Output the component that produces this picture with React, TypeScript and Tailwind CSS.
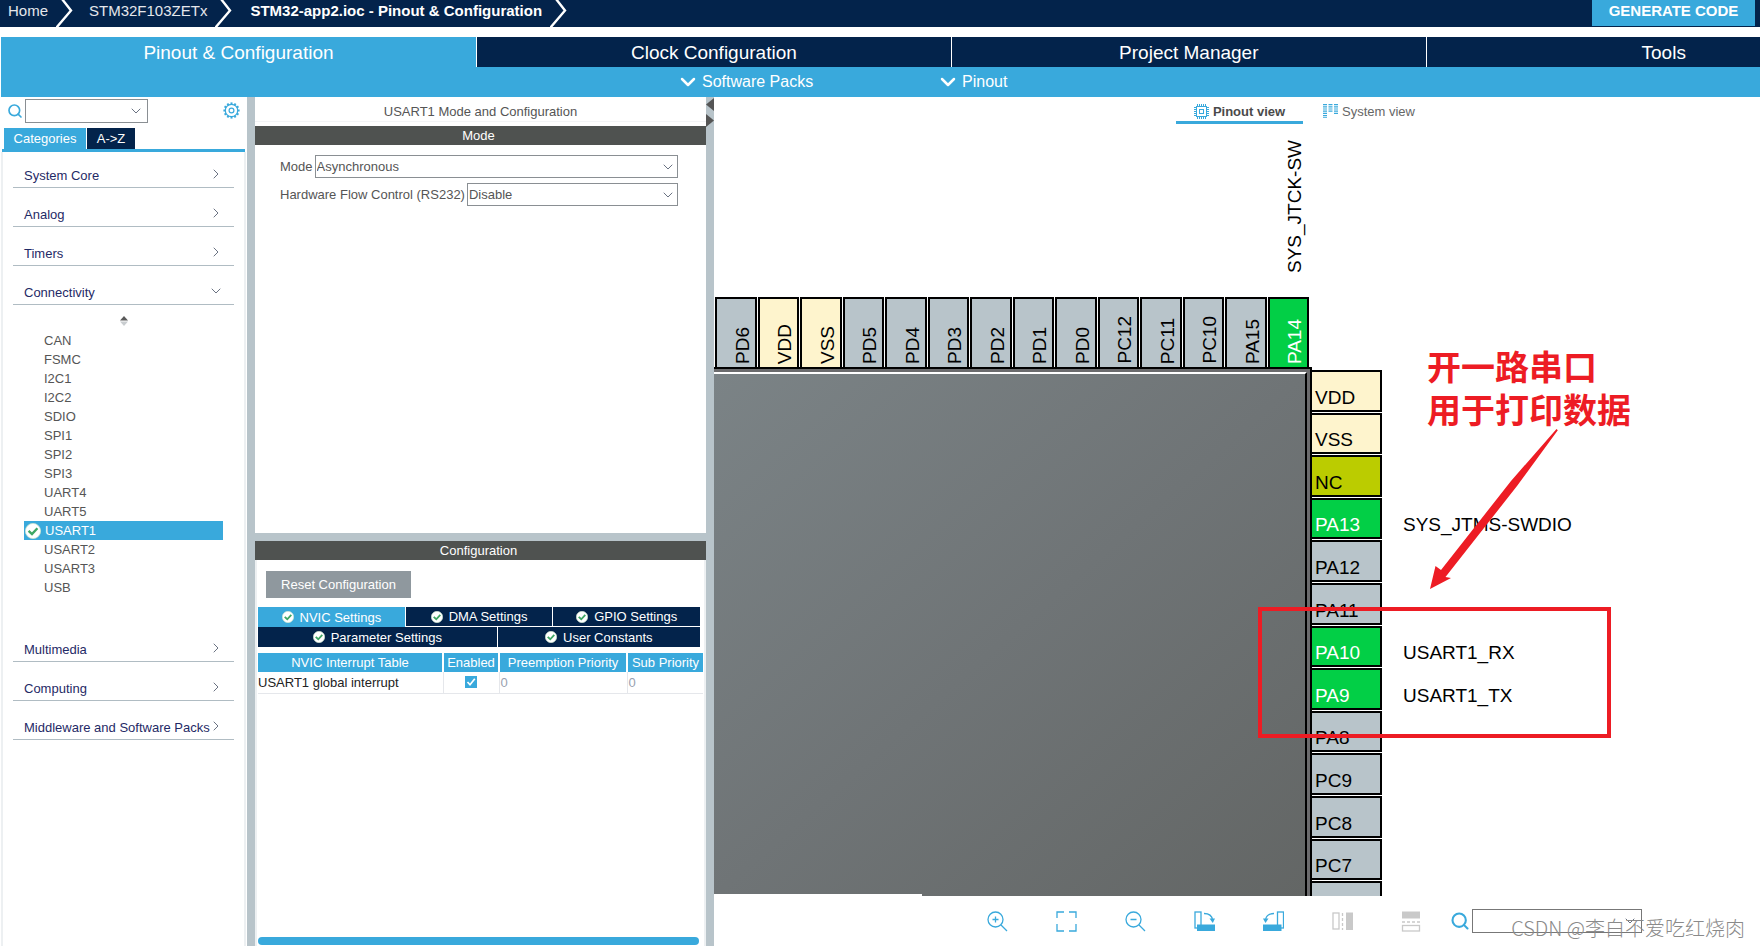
import { ReactNode } from 'react';
import { ChevronDown, ChevronRight, Search } from 'lucide-react';

const categoriesTop = ['System Core', 'Analog', 'Timers'];
const categoriesBottom = ['Multimedia', 'Computing', 'Middleware and Software Packs'];

const connectivity = [
  'CAN', 'FSMC', 'I2C1', 'I2C2', 'SDIO', 'SPI1', 'SPI2', 'SPI3',
  'UART4', 'UART5', 'USART1', 'USART2', 'USART3', 'USB',
];

type Pin = { name: string; kind?: 'power' | 'nc' | 'used'; signal?: string };

const topPins: Pin[] = [
  { name: 'PD6' },
  { name: 'VDD', kind: 'power' },
  { name: 'VSS', kind: 'power' },
  { name: 'PD5' },
  { name: 'PD4' },
  { name: 'PD3' },
  { name: 'PD2' },
  { name: 'PD1' },
  { name: 'PD0' },
  { name: 'PC12' },
  { name: 'PC11' },
  { name: 'PC10' },
  { name: 'PA15' },
  { name: 'PA14', kind: 'used', signal: 'SYS_JTCK-SW' },
];

const rightPins: Pin[] = [
  { name: 'VDD', kind: 'power' },
  { name: 'VSS', kind: 'power' },
  { name: 'NC', kind: 'nc' },
  { name: 'PA13', kind: 'used', signal: 'SYS_JTMS-SWDIO' },
  { name: 'PA12' },
  { name: 'PA11' },
  { name: 'PA10', kind: 'used', signal: 'USART1_RX' },
  { name: 'PA9', kind: 'used', signal: 'USART1_TX' },
  { name: 'PA8' },
  { name: 'PC9' },
  { name: 'PC8' },
  { name: 'PC7' },
  { name: '' },
];

function pinColor(kind?: Pin['kind']) {
  if (kind === 'power') return 'bg-[#fef4cd] text-black';
  if (kind === 'nc') return 'bg-[#bbcc00] text-black';
  if (kind === 'used') return 'bg-[#02cf46] text-white';
  return 'bg-[#b8c4ca] text-black';
}

function CrumbArrow() {
  return (
    <svg width="17" height="27" viewBox="0 0 17 27" fill="none" className="mx-2 shrink-0">
      <path d="M6 -1L15 10.5L0.5 27.5" stroke="white" strokeWidth="2.4" />
    </svg>
  );
}

function CheckBadge({ size }: { size: number }) {
  return (
    <svg width={size} height={size} viewBox="0 0 16 16" className="shrink-0">
      <circle cx="8" cy="8" r="7.6" fill="#fff" stroke="#cfe6cf" strokeWidth="0.8" />
      <path d="M3.6 7.8L7 11L12.4 5.2" fill="none" stroke="#3fa764" strokeWidth="2.4" />
    </svg>
  );
}

function GearIcon() {
  const teeth = [0, 30, 60, 90, 120, 150, 180, 210, 240, 270, 300, 330];
  return (
    <svg width="17" height="17" viewBox="0 0 17 17" fill="none" stroke="#39a9dc">
      <circle cx="8.5" cy="8.5" r="6.2" strokeWidth="1.2" />
      <circle cx="8.5" cy="8.5" r="2.4" strokeWidth="1.2" />
      {teeth.map((a) => (
        <path key={a} d="M8.5 0.4V2.4" strokeWidth="2" transform={`rotate(${a} 8.5 8.5)`} />
      ))}
    </svg>
  );
}

function ChipIcon() {
  const legs = [3.5, 5.5, 7.5, 9.5, 11.5];
  return (
    <svg width="15" height="15" viewBox="0 0 15 15" fill="none" stroke="#39a9dc">
      <rect x="2.5" y="2.5" width="10" height="10" />
      <rect x="5.5" y="5.5" width="4" height="4" />
      {legs.map((p) => (
        <path key={p} d={`M${p} 0V2M${p} 13V15M0 ${p}H2M13 ${p}H15`} />
      ))}
    </svg>
  );
}

function SystemIcon() {
  return (
    <svg width="15" height="14" viewBox="0 0 15 14" fill="none" stroke="#39a9dc" strokeWidth="4">
      <path d="M2 0V14" strokeDasharray="1.2 1" />
      <path d="M7.5 0V8" strokeDasharray="1.2 1" />
      <path d="M13 0V10" strokeDasharray="1.2 1" />
    </svg>
  );
}

function ToolIcon({ label, children }: { label: string; children: ReactNode }) {
  return (
    <button aria-label={label} className="w-[21px] shrink-0">
      <svg width="21" height="21" viewBox="0 0 21 21" fill="none" stroke="#39a9dc" strokeWidth="1.3">
        {children}
      </svg>
    </button>
  );
}

function Category({ label, open }: { label: string; open?: boolean }) {
  const Icon = open ? ChevronDown : ChevronRight;
  return (
    <button className="flex h-9 w-full items-center justify-between border-b border-[#b0bcc3] pt-3 pr-2.5 pl-[11px] text-left whitespace-nowrap text-[#1f2a66]">
      <span>{label}</span>
      <Icon className="-mt-1 -ml-2 h-4 w-4 shrink-0 text-gray-500" strokeWidth={1.5} />
    </button>
  );
}

function SelectRow({ id, label, value }: { id: string; label: string; value: string }) {
  return (
    <div className="flex items-center gap-0.5">
      <label htmlFor={id} className="shrink-0">{label}</label>
      <div className="relative flex-1">
        <select id={id} className="block h-[23px] w-full appearance-none border border-[#8a8f93] bg-white pl-px">
          <option>{value}</option>
        </select>
        <ChevronDown className="pointer-events-none absolute top-1 right-0.5 h-4 w-4 text-gray-500" strokeWidth={1.5} />
      </div>
    </div>
  );
}

function Header() {
  return (
    <header className="shrink-0">
      <div className="flex h-[27px] items-start justify-between bg-[#03234b] pr-[5px] text-[15px] leading-[22px] text-white">
        <nav className="flex pl-2 whitespace-nowrap">
          <a href="#home" className="text-gray-200">Home</a>
          <CrumbArrow />
          <a href="#mcu" className="ml-2 text-gray-200">STM32F103ZETx</a>
          <CrumbArrow />
          <a href="#ioc" className="ml-2.5 font-bold">STM32-app2.ioc - Pinout &amp; Configuration</a>
          <CrumbArrow />
        </nav>
        <button className="h-[26px] w-[163px] bg-[#39a9dc] pb-1 font-bold">GENERATE CODE</button>
      </div>

      <div className="mt-2.5 ml-px flex h-[30px] overflow-hidden text-[19px] text-white">
        <button className="w-[27%] shrink-0 bg-[#39a9dc]">Pinout &amp; Configuration</button>
        <button className="w-[27%] shrink-0 border-l border-white bg-[#03234b]">Clock Configuration</button>
        <button className="w-[27%] shrink-0 border-l border-white bg-[#03234b]">Project Manager</button>
        <button className="w-[27%] shrink-0 border-l border-white bg-[#03234b]">Tools</button>
      </div>
      <div className="ml-px flex h-[30px] items-center justify-center bg-[#39a9dc] text-base text-white">
        <button className="flex w-[260px] items-center gap-0.5">
          <ChevronDown className="h-6 w-6" strokeWidth={2.5} />
          Software Packs
        </button>
        <button className="flex w-[149px] items-center gap-0.5">
          <ChevronDown className="h-6 w-6" strokeWidth={2.5} />
          Pinout
        </button>
      </div>
    </header>
  );
}

function Sidebar() {
  return (
    <aside className="flex w-[247px] shrink-0 flex-col">
      <div className="flex h-[31px] shrink-0 items-start pt-0.5 pr-[7px] pl-[7px]">
        <Search className="mt-1 h-4 w-4 text-[#39a9dc]" strokeWidth={2.5} />
        <div className="relative ml-0.5">
          <input aria-label="Search peripherals" className="block h-6 w-[123px] border border-[#8a8f93] pr-5" />
          <ChevronDown className="pointer-events-none absolute top-1 right-1 h-4 w-4 text-gray-500" strokeWidth={1.5} />
        </div>
        <button aria-label="Settings" className="mt-[3px] ml-auto">
          <GearIcon />
        </button>
      </div>
      <div className="mr-0.5 ml-0.5 flex shrink-0 gap-px border-b-[3px] border-[#39a9dc] pl-0.5 text-white">
        <button className="h-[21px] w-[82px] bg-[#39a9dc]">Categories</button>
        <button className="h-[21px] w-12 bg-[#03234b]">A-&gt;Z</button>
      </div>

      <div className="mr-px ml-px flex-1 border-r-2 border-l-2 border-[#edf0f2] px-2.5">
        <div className="flex flex-col gap-[3px]">
          {categoriesTop.map((c) => (
            <Category key={c} label={c} />
          ))}
          <Category label="Connectivity" open />
          <div className="pb-[26px]">
            <svg width="10" height="10" viewBox="0 0 8 10" className="mx-auto mt-2 mb-[5px]">
              <path d="M4 0L8 4.4H0Z" fill="#5a5a5a" />
              <path d="M4 10L0 5.6H8Z" fill="#c9cdd0" />
            </svg>
            <ul className="px-[11px] text-[#555]">
              {connectivity.map((name) => (
                <li key={name}>
                  {name === 'USART1' ? (
                    <button className="flex h-[19px] w-full items-center gap-1 bg-[#39a9dc] pl-px text-white">
                      <CheckBadge size={16} />
                      {name}
                    </button>
                  ) : (
                    <button className="block h-[19px] w-full pl-5 text-left">{name}</button>
                  )}
                </li>
              ))}
            </ul>
          </div>
          {categoriesBottom.map((c) => (
            <Category key={c} label={c} />
          ))}
        </div>
      </div>
    </aside>
  );
}

function ConfigTab({ label, className }: { label: string; className: string }) {
  return (
    <button className={`flex h-5 items-center justify-center gap-1.5 ${className}`}>
      <CheckBadge size={12} />
      {label}
    </button>
  );
}

function ModePanel() {
  return (
    <section className="flex w-[467px] shrink-0 flex-col border-r-8 border-l-8 border-[#b8c4ca] text-[#555]">
      <div className="flex h-[444px] shrink-0 flex-col border-b-8 border-[#b8c4ca]">
        <h1 className="mb-1 h-[25px] border-b border-gray-100 pt-[5px] text-center">USART1 Mode and Configuration</h1>
        <h2 className="h-[19px] bg-[#4f5250] pr-1 text-center text-white">Mode</h2>
        <div className="flex flex-col gap-[5px] pt-2.5 pr-7 pl-[25px]">
          <SelectRow id="mode" label="Mode" value="Asynchronous" />
          <SelectRow id="flow" label="Hardware Flow Control (RS232)" value="Disable" />
        </div>
      </div>

      <h2 className="h-[19px] shrink-0 bg-[#4f5250] pr-1 text-center text-white">Configuration</h2>
      <div className="flex min-h-0 flex-1 flex-col border-r-2 border-l-2 border-[#edf0f2] px-px">
        <button className="mt-[11px] ml-2 h-[27px] w-[145px] shrink-0 bg-[#8f989e] text-white">Reset Configuration</button>
        <div className="mt-[9px] mr-[3px] flex gap-px text-white">
          <ConfigTab label="NVIC Settings" className="flex-1 bg-[#39a9dc]" />
          <ConfigTab label="DMA Settings" className="flex-1 border-b border-white bg-[#03234b]" />
          <ConfigTab label="GPIO Settings" className="flex-1 border-b border-white bg-[#03234b]" />
        </div>
        <div className="mr-[3px] flex gap-px text-white">
          <ConfigTab label="Parameter Settings" className="w-[54%] bg-[#03234b]" />
          <ConfigTab label="User Constants" className="flex-1 bg-[#03234b]" />
        </div>
        <table className="mt-1.5 w-full table-fixed border-collapse">
          <thead>
            <tr className="h-[19px] bg-[#39a9dc] whitespace-nowrap text-white">
              <th className="border-r-2 border-white font-normal">NVIC Interrupt Table</th>
              <th className="w-14 border-r-2 border-white font-normal">Enabled</th>
              <th className="w-32 border-r-2 border-white font-normal">Preemption Priority</th>
              <th className="w-[76px] font-normal">Sub Priority</th>
            </tr>
          </thead>
          <tbody>
            <tr className="h-[21px] border-b border-gray-200">
              <td className="border-r border-gray-200 text-[#222]">USART1 global interrupt</td>
              <td className="border-r border-gray-200">
                <span className="relative mx-auto block h-3 w-3">
                  <input type="checkbox" defaultChecked aria-label="USART1 global interrupt enabled" className="block h-3 w-3 appearance-none bg-[#39a9dc]" />
                  <svg viewBox="0 0 12 12" className="pointer-events-none absolute inset-0">
                    <path d="M2.5 6L5 8.8L9.8 2.8" fill="none" stroke="white" strokeWidth="1.7" />
                  </svg>
                </span>
              </td>
              <td className="border-r border-gray-200 pl-px text-gray-400">0</td>
              <td className="pl-px text-gray-400">0</td>
            </tr>
          </tbody>
        </table>
        <div className="mt-auto mr-1 mb-px h-2 shrink-0 rounded-full bg-[#39a9dc]" />
      </div>
    </section>
  );
}

function ChipView() {
  return (
    <div className="relative flex min-h-0 flex-1 flex-col overflow-hidden text-[19px] leading-6">
      <div className="flex h-[227px] w-[595px] shrink-0 items-end gap-px pl-px">
        {topPins.map((pin) => (
          <div key={pin.name} className="flex flex-1 flex-col items-end">
            {pin.signal && (
              <span className="mr-0.5 mb-6 rotate-180 whitespace-nowrap text-black [writing-mode:vertical-rl]">{pin.signal}</span>
            )}
            <div className={`flex h-[70px] w-full items-end justify-end border-2 border-b-0 border-black pb-[3px] ${pinColor(pin.kind)}`}>
              <span className="rotate-180 [writing-mode:vertical-rl]">{pin.name}</span>
            </div>
          </div>
        ))}
      </div>

      <div className="flex min-h-0 flex-1">
        <div className="w-[598px] shrink-0 border-t-2 border-r-2 border-black bg-[#6b6b6d] pt-[3px] pr-[3px]">
          <div className="h-full border-t-2 border-r-2 border-t-white border-r-black bg-linear-to-br from-[#7b8386] via-[#6f7476] to-[#636665]" />
        </div>
        <div className="flex h-[556px] flex-col gap-px pt-[3px]">
          {rightPins.map((pin, i) => (
            <div key={i} className="flex flex-1 items-stretch gap-[21px]">
              <div className={`flex w-[70px] items-end border-2 border-l-0 border-black pl-[3px] ${pinColor(pin.kind)}`}>
                {pin.name}
              </div>
              {pin.signal && <span className="self-end pb-0.5 text-black">{pin.signal}</span>}
            </div>
          ))}
        </div>
      </div>
      <div className="absolute bottom-0 left-0 h-0.5 w-52 bg-white" />

      {/* Red markup drawn over the pins */}
      <div className="absolute top-[467px] left-[544px] h-[131px] w-[353px] border-4 border-[#ed1c24]" />
      <p className="absolute top-[204px] left-[713px] font-['Noto_Sans_CJK_SC',sans-serif] text-[34px] leading-[43px] font-bold whitespace-nowrap text-[#ed1c24]">
        开一路串口
        <br />
        用于打印数据
      </p>
      <svg width="130" height="162" viewBox="0 0 130 162" className="absolute top-[288px] left-[715px]">
        <path d="M127.5 1L128.8 2.2L88 58L16.5 149L22 150L1 161L6.5 138L12 142L82 53Z" fill="#ed1c24" />
      </svg>
    </div>
  );
}

function Toolbar() {
  return (
    <div className="relative flex h-[50px] shrink-0 items-center gap-12 pl-[273px]">
      <ToolIcon label="Zoom in">
        <circle cx="8.5" cy="8.5" r="7.5" />
        <path d="M14 14L20 20M8.5 5.5V11.5M5.5 8.5H11.5" />
      </ToolIcon>
      <ToolIcon label="Best fit">
        <path d="M1 7V1H8M13 1H20V7M20 13V20H13M8 20H1V13" />
      </ToolIcon>
      <ToolIcon label="Zoom out">
        <circle cx="8.5" cy="8.5" r="7.5" />
        <path d="M14 14L20 20M5.5 8.5H11.5" />
      </ToolIcon>
      <ToolIcon label="Rotate clockwise">
        <rect x="1" y="1" width="6" height="16" />
        <rect x="3" y="13.5" width="18" height="6.5" fill="#39a9dc" stroke="none" />
        <path d="M10 2.5C15 2.5 18 5 18.5 9" />
        <path d="M15.5 7.5H21L18.8 12Z" fill="#39a9dc" stroke="none" />
      </ToolIcon>
      <ToolIcon label="Rotate counterclockwise">
        <rect x="14.5" y="1" width="6" height="16" />
        <rect x="0" y="13.5" width="18.5" height="6.5" fill="#39a9dc" stroke="none" />
        <path d="M11 2.5C6 2.5 3 5 2.5 9" />
        <path d="M0 7.5H5.5L2.5 12Z" fill="#39a9dc" stroke="none" />
      </ToolIcon>
      <ToolIcon label="Flip horizontally">
        <rect x="1" y="2" width="6" height="16" stroke="#c9c9c9" />
        <path d="M10.5 2V19" stroke="#c9c9c9" strokeDasharray="3 2" />
        <rect x="14" y="1.5" width="7" height="17.5" fill="#c9c9c9" stroke="none" />
      </ToolIcon>
      <ToolIcon label="Flip vertically">
        <rect x="1" y="0.5" width="18" height="7" fill="#c9c9c9" stroke="none" />
        <path d="M1 11H19" stroke="#c9c9c9" strokeDasharray="3 2" />
        <rect x="1.5" y="14.5" width="17" height="5.5" stroke="#c9c9c9" />
      </ToolIcon>
      <div className="-ml-5 flex items-center">
        <Search className="h-5 w-5 text-[#39a9dc]" strokeWidth={2.5} />
        <div className="relative ml-0.5">
          <input aria-label="Find pin" className="block h-6 w-[170px] border border-[#777] pr-5" />
          <ChevronDown className="pointer-events-none absolute top-1 right-1 h-4 w-4 text-gray-500" strokeWidth={1.5} />
        </div>
      </div>
      <span className="absolute right-[15px] bottom-1 font-['Noto_Sans_CJK_SC',sans-serif] text-[20px] leading-7 font-light whitespace-nowrap text-[#8a8a8a]">
        CSDN @李白不爱吃红烧肉
      </span>
    </div>
  );
}

export default function App() {
  return (
    <div className="flex h-screen flex-col overflow-hidden bg-white font-['Liberation_Sans',Arial,sans-serif] text-[13px] leading-[19px]">
      <Header />
      <div className="flex min-h-0 flex-1">
        <Sidebar />
        <ModePanel />
        <main className="relative flex min-w-0 flex-1 flex-col">
          <div className="absolute top-0 -left-2 w-2">
            <svg width="8" height="32" viewBox="0 0 8 32" fill="#555">
              <path d="M8 1V14L0 7.5Z" />
              <path d="M0 17V30L8 23.5Z" />
            </svg>
          </div>
          <div className="flex h-[43px] shrink-0 items-start gap-5 pl-[462px]">
            <button className="flex h-[27px] w-[127px] items-center justify-center gap-1 border-b-[3px] border-[#39a9dc] pt-1 font-bold text-[#4a4a4a]">
              <ChipIcon />
              Pinout view
            </button>
            <button className="flex h-[27px] items-center gap-1 pt-px text-[#666]">
              <SystemIcon />
              System view
            </button>
          </div>
          <ChipView />
          <Toolbar />
        </main>
      </div>
    </div>
  );
}
